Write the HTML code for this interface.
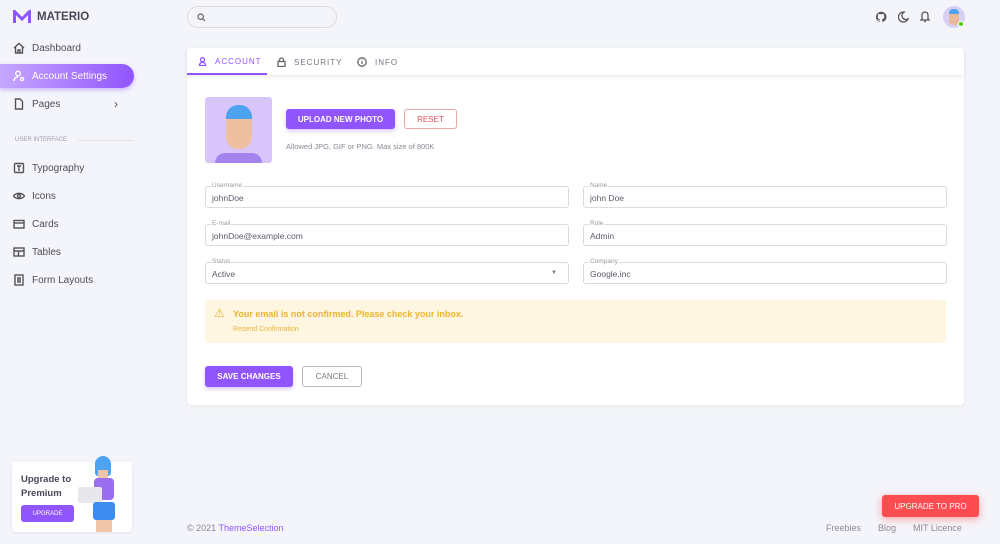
<!DOCTYPE html><html><head><style>
*{box-sizing:border-box;margin:0;padding:0}
body{width:1000px;height:544px;background:#f4f5fa;font-family:"Liberation Sans",sans-serif;position:relative;overflow:hidden;color:#5e5873}
.a{position:absolute}
.nav{position:absolute;left:0;width:134px;height:24px;display:flex;align-items:center;padding-left:13px;font-size:10px;color:#4f4b5c}
.nav svg{width:12px;height:12px;margin-right:7px;stroke:#555;fill:none;stroke-width:1.4}
.fld{position:absolute;height:22px;border:1px solid #dcdbe0;border-radius:3px;background:#fff}
.fld .l{position:absolute;top:-5px;left:5px;background:#fff;padding:0 1px;font-size:6.5px;color:#9a98a2}
.fld .v{position:absolute;top:6px;left:6px;font-size:8.5px;color:#5d5a68}
.btn{position:absolute;display:flex;align-items:center;justify-content:center;font-size:8px;font-weight:bold;border-radius:3px}
.tab{position:absolute;top:9px;font-size:8px;letter-spacing:1px;color:#77737f;display:flex;align-items:center}
.tab svg{margin-right:8px;fill:none;stroke-width:1.3}
</style></head><body>
<div class="a" style="left:13px;top:10px;display:flex;align-items:center">
<svg width="18" height="14" viewBox="0 0 18 14"><path d="M1.5 13V1.5l7.5 7.5 7.5-7.5V13" stroke="#9155fd" stroke-width="3" fill="none"/></svg>
<span style="margin-left:6px;font-weight:bold;font-size:11.5px;color:#4a4658">MATERIO</span></div>
<div class="nav" style="top:36px"><svg viewBox="0 0 12 12"><path d="M1 6L6 1.5l5 4.5M2.5 5v6h7V5M5 11V8h2v3"/></svg>Dashboard</div>
<div class="nav" style="top:64px;background:linear-gradient(90deg,#c6a7fe,#9155fd);border-radius:0 12px 12px 0;color:#fff;box-shadow:0 2px 5px rgba(145,85,253,.4)"><svg viewBox="0 0 12 12" style="stroke:#fff"><circle cx="5" cy="3.5" r="2.3"/><path d="M1 11c0-3 2-4 4-4"/><circle cx="9" cy="9" r="1.6"/></svg>Account Settings</div>
<div class="nav" style="top:92px"><svg viewBox="0 0 12 12"><path d="M2.5 1h4.5l2.5 2.5V11h-7z"/></svg>Pages<span style="position:absolute;left:114px;font-size:12px">›</span></div>
<div class="a" style="left:15px;top:137px;font-size:6px;color:#9a98a2">USER INTERFACE</div>
<div class="a" style="left:78px;top:140px;width:56px;height:1px;background:#e3e2e7"></div>
<div class="nav" style="top:156px"><svg viewBox="0 0 12 12"><rect x="1.5" y="1.5" width="9" height="9" rx="1"/><path d="M4 4h4M6 4v5"/></svg>Typography</div>
<div class="nav" style="top:184px"><svg viewBox="0 0 12 12"><path d="M.5 6C3 2.5 9 2.5 11.5 6 9 9.5 3 9.5.5 6z"/><circle cx="6" cy="6" r="1.5"/></svg>Icons</div>
<div class="nav" style="top:212px"><svg viewBox="0 0 12 12"><rect x="1" y="2.5" width="10" height="7.5"/><path d="M1 5h10"/></svg>Cards</div>
<div class="nav" style="top:240px"><svg viewBox="0 0 12 12"><rect x="1" y="2" width="10" height="8"/><path d="M1 5h10M5.5 5v5"/></svg>Tables</div>
<div class="nav" style="top:268px"><svg viewBox="0 0 12 12"><rect x="2" y="1" width="8" height="10"/><path d="M4 4h4M4 6h4M4 8h4"/></svg>Form Layouts</div>
<div class="a" style="left:12px;top:462px;width:120px;height:70px;background:#fff;border-radius:3px;box-shadow:0 1px 3px rgba(0,0,0,.08)">
<div class="a" style="left:9px;top:11px;font-size:9.5px;font-weight:bold;line-height:13.5px;color:#4a4658">Upgrade to<br>Premium</div>
<div class="btn" style="left:9px;top:43px;width:53px;height:17px;background:#9155fd;color:#fff;font-size:6px;font-weight:normal">UPGRADE</div>
<div class="a" style="left:83px;top:-6px;width:16px;height:20px;background:#4ea3f0;border-radius:8px 8px 3px 3px"></div>
<div class="a" style="left:86px;top:8px;width:10px;height:8px;background:#f0c4a8"></div>
<div class="a" style="left:82px;top:16px;width:20px;height:22px;background:#9b6ef0;border-radius:4px"></div>
<div class="a" style="left:66px;top:25px;width:24px;height:16px;background:#e8e8ec;border-radius:2px"></div>
<div class="a" style="left:81px;top:40px;width:22px;height:18px;background:#3d8cf0;border-radius:3px"></div>
<div class="a" style="left:84px;top:58px;width:16px;height:12px;background:#f0c4a8"></div>
</div>
<div class="a" style="left:187px;top:6px;width:150px;height:22px;border:1px solid #dcdbe0;border-radius:11px"><svg class="a" style="left:9px;top:6px" width="9" height="9" viewBox="0 0 9 9"><circle cx="3.7" cy="3.7" r="2.7" stroke="#666" fill="none" stroke-width="1.2"/><path d="M5.8 5.8L8 8" stroke="#666" stroke-width="1.2"/></svg></div>
<svg class="a" style="left:875px;top:11px" width="12" height="12" viewBox="0 0 12 12"><path d="M6 .8a5.2 5.2 0 0 0-1.6 10.1c.3 0 .4-.1.4-.3V9.7c-1.5.3-1.8-.6-1.8-.6-.2-.6-.6-.8-.6-.8-.5-.3 0-.3 0-.3.5 0 .8.5.8.5.5.8 1.2.6 1.5.4 0-.3.2-.6.4-.7-1.2-.1-2.4-.6-2.4-2.6 0-.6.2-1 .5-1.4 0-.1-.2-.7.1-1.4 0 0 .4-.1 1.4.5a5 5 0 0 1 2.6 0c1-.7 1.4-.5 1.4-.5.3.7.1 1.300.1 1.400.3.4.5.8.5 1.4 0 2-1.200 2.500-2.400 2.600.2.2.4.5.4 1v1.500c0 .2.1.3.4.3A5.200 5.200 0 0 0 6 .8z" fill="#555"/></svg>
<svg class="a" style="left:898px;top:11px" width="11" height="12" viewBox="0 0 11 12"><path d="M6 1a5 5 0 1 0 4 7A4 4 0 0 1 6 1z" fill="none" stroke="#555" stroke-width="1.3"/></svg>
<svg class="a" style="left:920px;top:10px" width="10" height="13" viewBox="0 0 10 13"><path d="M2 9V5a3 3 0 0 1 6 0v4l1 1H1zM4 11.5h2" fill="none" stroke="#555" stroke-width="1.3"/></svg>
<div class="a" style="left:943px;top:6px;width:22px;height:22px;border-radius:50%;background:#d8cff5;overflow:hidden"><div class="a" style="left:6px;top:3px;width:10px;height:16px;background:#e9b99a;border-radius:4px;border-top:5px solid #4ea3f0"></div></div>
<div class="a" style="left:958px;top:21px;width:6px;height:6px;border-radius:50%;background:#56ca00;border:1px solid #fff"></div>
<div class="a" style="left:187px;top:48px;width:777px;height:357px;background:#fff;border-radius:4px;box-shadow:0 1px 4px rgba(0,0,0,.06)">
<div class="a" style="left:0;top:0;width:777px;height:27px;box-shadow:0 2px 3px rgba(0,0,0,.07)"></div>
<div class="tab" style="left:11px;color:#9155fd"><svg width="9" height="9" viewBox="0 0 9 9" stroke="#9155fd"><circle cx="4.5" cy="2.7" r="2"/><path d="M.8 8.5h7.4M1.5 8.3c0-2 1.5-3 3-3s3 1 3 3"/></svg>ACCOUNT</div>
<div class="a" style="left:0;top:25px;width:80px;height:2px;background:#9155fd"></div>
<div class="tab" style="left:90px"><svg width="9" height="10" viewBox="0 0 9 10" stroke="#666"><rect x="1" y="4.5" width="7" height="5"/><path d="M2.5 4.5V3a2 2 0 0 1 4 0v1.5"/></svg>SECURITY</div>
<div class="tab" style="left:170px"><svg width="10" height="10" viewBox="0 0 10 10" stroke="#666"><circle cx="5" cy="5" r="4.2"/><path d="M5 4.3v3M5 2.6v.6"/></svg>INFO</div>
<div class="a" style="left:18px;top:49px;width:67px;height:66px;background:#d8c6fb;border-radius:3px;overflow:hidden">
<div class="a" style="left:21px;top:8px;width:26px;height:44px;background:#eec0a0;border-radius:12px;border-top:14px solid #4ea3f0"></div>
<div class="a" style="left:10px;top:56px;width:47px;height:14px;background:#a583ef;border-radius:10px 10px 0 0"></div></div>
<div class="btn" style="left:99px;top:61px;width:109px;height:20px;background:#9155fd;color:#fff;box-shadow:0 2px 4px rgba(145,85,253,.35)">UPLOAD NEW PHOTO</div>
<div class="btn" style="left:217px;top:61px;width:53px;height:20px;border:1px solid #e9a9ab;color:#d9535a;font-weight:normal">RESET</div>
<div class="a" style="left:99px;top:94px;font-size:7.5px;color:#8b8893">Allowed JPG, GIF or PNG. Max size of 800K</div>
</div>
<div class="fld" style="left:205px;top:186px;width:364px"><span class="l">Username</span><span class="v">johnDoe</span></div>
<div class="fld" style="left:583px;top:186px;width:364px"><span class="l">Name</span><span class="v">john Doe</span></div>
<div class="fld" style="left:205px;top:224px;width:364px"><span class="l">E-mail</span><span class="v">johnDoe@example.com</span></div>
<div class="fld" style="left:583px;top:224px;width:364px"><span class="l">Role</span><span class="v">Admin</span></div>
<div class="fld" style="left:205px;top:262px;width:364px"><span class="l">Status</span><span class="v">Active</span><span class="a" style="left:345px;top:7px;font-size:6px;color:#777">▼</span></div>
<div class="fld" style="left:583px;top:262px;width:364px"><span class="l">Company</span><span class="v">Google.inc</span></div>
<div class="a" style="left:205px;top:300px;width:741px;height:43px;background:#fff6e2;border-radius:3px">
<span class="a" style="left:9px;top:6px;font-size:12px;color:#e8b32d">⚠</span>
<span class="a" style="left:28px;top:9px;font-size:9px;font-weight:bold;color:#ecb42f">Your email is not confirmed. Please check your inbox.</span>
<span class="a" style="left:28px;top:26px;font-size:7px;color:#e6b43c">Resend Confirmation</span></div>
<div class="btn" style="left:205px;top:366px;width:88px;height:21px;background:#9155fd;color:#fff;box-shadow:0 2px 4px rgba(145,85,253,.35)">SAVE CHANGES</div>
<div class="btn" style="left:302px;top:366px;width:60px;height:21px;border:1px solid #b9b7bf;color:#7b7884;font-weight:normal">CANCEL</div>
<div class="a" style="left:187px;top:523px;font-size:9px;color:#8d8a95">© 2021 <span style="color:#9155fd">ThemeSelection</span></div>
<div class="a" style="left:826px;top:523px;font-size:9px;color:#8d8a95">Freebies</div>
<div class="a" style="left:878px;top:523px;font-size:9px;color:#8d8a95">Blog</div>
<div class="a" style="left:913px;top:523px;font-size:9px;color:#8d8a95">MIT Licence</div>
<div class="btn" style="left:882px;top:495px;width:97px;height:22px;background:#ff4c51;color:#fff;box-shadow:0 2px 8px rgba(255,76,81,.5);font-weight:normal">UPGRADE TO PRO</div>
</body></html>
